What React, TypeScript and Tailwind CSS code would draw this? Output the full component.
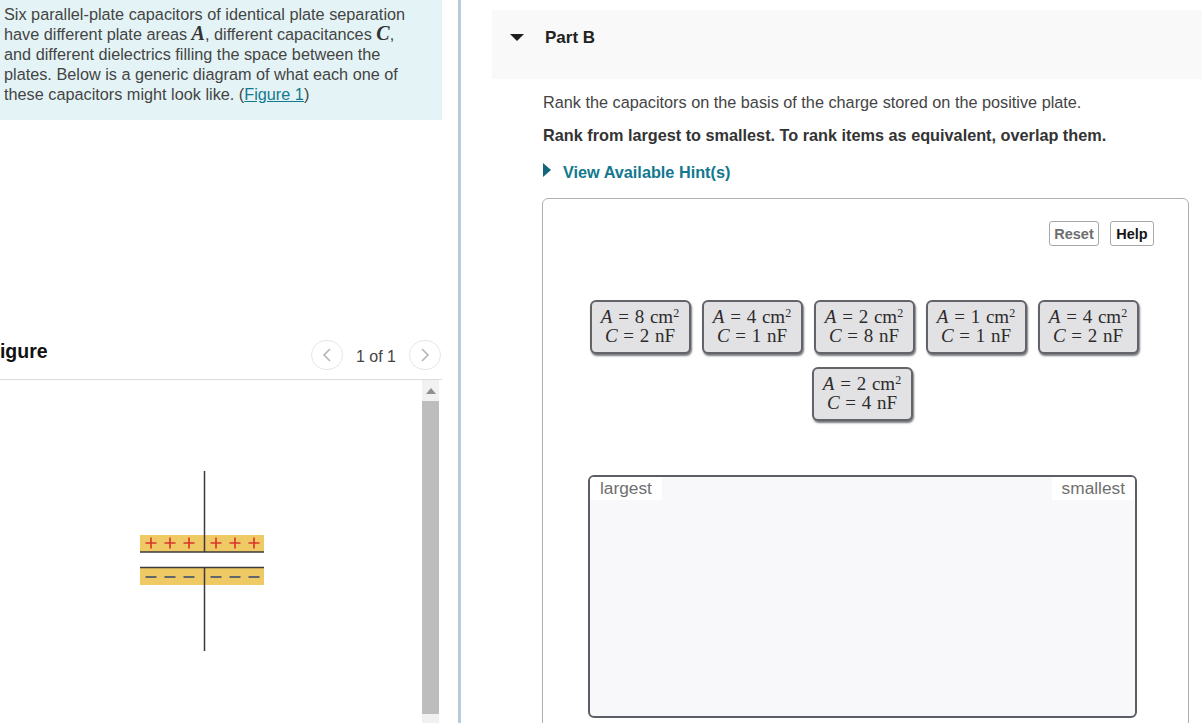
const sans = { fontFamily: '"Liberation Sans", Arial, sans-serif' };

const chips = [
  { a: 8, c: 2 },
  { a: 4, c: 1 },
  { a: 2, c: 8 },
  { a: 1, c: 1 },
  { a: 4, c: 2 },
  { a: 2, c: 4 },
];

function Chip({ a, c, className = "" }: { a: number; c: number; className?: string }) {
  return (
    <div
      className={`flex h-[54px] w-[101px] flex-col items-center justify-center rounded-[6px] border-2 border-[#62646a] bg-[#e2e2e4] pb-[2px] font-['Liberation_Serif',serif] text-[19px] leading-[19px] text-[#2c2c2c] shadow-[1px_2px_2px_#77797f] [word-spacing:1px] ${className}`}
    >
      <div className="whitespace-nowrap">
        <i>A</i> = {a} cm<sup className="text-[12px] leading-none">2</sup>
      </div>
      <div className="whitespace-nowrap">
        <i>C</i> = {c} nF
      </div>
    </div>
  );
}

function NavCircle({ dir }: { dir: "left" | "right" }) {
  return (
    <div className="flex h-[30px] w-[32px] items-center justify-center rounded-full border border-[#e6e6e6] bg-white">
      <svg width="12" height="16" viewBox="0 0 12 16" fill="none" stroke="#b5b5b5" strokeWidth="1.6">
        <path d={dir === "left" ? "M9 2 3 8l6 6" : "M3 2l6 6-6 6"} />
      </svg>
    </div>
  );
}

function Capacitor() {
  const plus = [151, 170, 189, 216, 235, 254];
  return (
    <svg width="124" height="180" viewBox="140 471 124 180" className="block">
      <rect x="140" y="535" width="124" height="17" fill="#efc964" />
      <rect x="140" y="568" width="124" height="17" fill="#efc964" />
      <path d="M140 552h124M140 567.5h124" stroke="#3b3b3b" strokeWidth="1.5" />
      <path d="M204.500 471v81M204.500 567v84" stroke="#3b3b3b" strokeWidth="1.5" />
      {plus.map((x) => (
        <path key={x} d={`M${x - 5.500} 543h11M${x} 537.500v11`} stroke="#d8342b" strokeWidth="1.6" />
      ))}
      {plus.map((x) => (
        <path key={x} d={`M${x - 5.500} 577h11`} stroke="#5f666c" strokeWidth="2" />
      ))}
    </svg>
  );
}

export default function App() {
  return (
    <div className="flex h-[723px] w-[1202px] overflow-hidden bg-white" style={sans}>
      {/* left column */}
      <div className="flex h-full w-[461px] shrink-0 flex-col border-r-[3px] border-[#b9ccdc] pr-[16px]">
        <div className="h-[120px] w-[442px] bg-[#e4f4f6] pl-[4px] pr-[30px] pt-[4px] text-[16.25px] leading-[20px] text-[#444]">
          Six parallel-plate capacitors of identical plate separation have different plate areas{" "}
          <i className="font-['Liberation_Serif',serif] text-[20px] font-bold leading-[0] text-[#333]">A</i>, different
          capacitances{" "}
          <i className="font-['Liberation_Serif',serif] text-[20px] font-bold leading-[0] text-[#333]">C</i>, and
          different dielectrics filling the space between the plates. Below is a generic diagram of what each one of
          these capacitors might look like. (
          <span className="text-[#12798f] underline">Figure 1</span>)
        </div>

        <div className="mt-[218px] flex h-[42px] w-[442px] items-start border-b border-[#dcdcdc]">
          <div className="ml-[-12px] mt-[2px] text-[19.5px] font-bold leading-[22px] text-[#111]">Figure</div>
          <div className="ml-auto mr-[1px] mt-[2px] flex items-center">
            <NavCircle dir="left" />
            <span className="mx-[13px] mt-[4px] text-[16px] leading-[20px] text-[#444]">1 of 1</span>
            <NavCircle dir="right" />
          </div>
        </div>

        <div className="flex min-h-0 w-[442px] flex-1">
          <div className="flex-1 pl-[140px] pt-[91px]">
            <Capacitor />
          </div>
          <div className="mr-[3px] flex w-[17px] flex-col bg-[#f1f1f1]">
            <div className="flex h-[21px] items-center justify-center">
              <div className="h-0 w-0 border-x-[5px] border-b-[6px] border-x-transparent border-b-[#8f8f8f]" />
            </div>
            <div className="h-[313px] bg-[#bdbdbd]" />
          </div>
        </div>
      </div>

      {/* right column */}
      <div className="flex-1 pl-[31px] pt-[10px]">
        <div className="flex h-[69px] items-center bg-[#f9f9f9] pb-[14px]">
          <div className="ml-[18px] h-0 w-0 border-x-[7px] border-t-[7px] border-x-transparent border-t-[#1f1f1f]" />
          <div className="ml-[21px] text-[17px] font-bold text-[#222]">Part B</div>
        </div>

        <div className="pl-[51px]">
          <p className="mt-[13px] text-[16.25px] leading-[20px] text-[#444]">
            Rank the capacitors on the basis of the charge stored on the positive plate.
          </p>
          <p className="mt-[13px] text-[16.25px] font-bold leading-[20px] text-[#333]">
            Rank from largest to smallest. To rank items as equivalent, overlap them.
          </p>
          <div className="mt-[17px] flex items-center text-[16.25px] font-bold leading-[20px] text-[#12788e]">
            <div className="mb-[5px] h-0 w-0 border-y-[7px] border-l-[8px] border-y-transparent border-l-[#12667c]" />
            <span className="ml-[12px]">View Available Hint(s)</span>
          </div>

          <div className="ml-[-1px] mr-[13px] mt-[16px] h-[600px] rounded-[6px] border border-[#b0b0b0] px-[45px] pt-[22px]">
            <div className="flex justify-end gap-[11px] text-[14.5px] font-bold leading-[20px]">
              <div className="flex h-[25px] w-[50px] items-center justify-center rounded-[3px] border border-[#a8a8a8] text-[#6e6e6e]">
                Reset
              </div>
              <div className="mr-[-11px] flex h-[25px] w-[44px] items-center justify-center rounded-[3px] border border-[#a8a8a8] text-[#151515]">
                Help
              </div>
            </div>

            <div className="mt-[54px] flex w-[552px] flex-wrap justify-center gap-x-[11px] gap-y-[13px]">
              {chips.map((c, i) => (
                <Chip key={i} a={c.a} c={c.c} className={i === 5 ? "ml-[-4px]" : ""} />
              ))}
            </div>

            <div className="mt-[54px] h-[243px] w-[549px] overflow-hidden rounded-[6px] border-2 border-[#5c5e66] bg-[#f8f8fa]">
              <div className="flex justify-between text-[17.3px] leading-[22px] text-[#6f6f6f]">
                <span className="bg-white px-[10px] pb-[1px]">largest</span>
                <span className="bg-white px-[10px] pb-[1px]">smallest</span>
              </div>
            </div>
          </div>
        </div>
      </div>
    </div>
  );
}
